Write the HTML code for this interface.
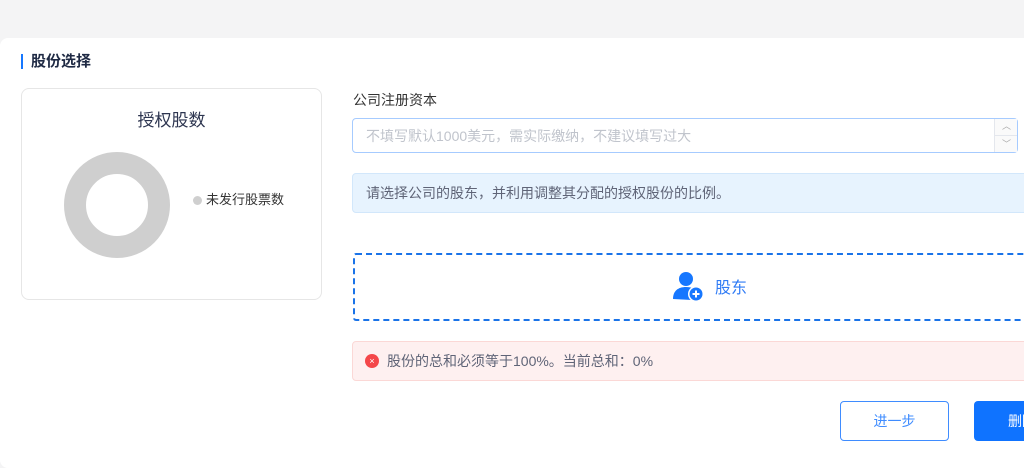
<!DOCTYPE html>
<html><head><meta charset="utf-8"><style>
*{margin:0;padding:0;box-sizing:border-box}
body{width:1024px;height:450px;overflow:hidden;background:#f4f4f5;font-family:"Liberation Sans","Noto Sans CJK SC",sans-serif;position:relative}
.card{position:absolute;left:0;top:38px;width:1040px;height:430px;background:#fff;border-radius:8px}
.a{position:absolute}
</style></head><body>
<div class="card"></div>
<div class="a" style="left:21px;top:54px;width:2px;height:15px;background:#1677ff"></div>
<div class="a" style="left:31px;top:51px;font-size:15px;font-weight:bold;color:#1f2a44;line-height:22px">股份选择</div>
<div class="a" style="left:21px;top:88px;width:301px;height:212px;border:1px solid #e6e6e6;border-radius:8px"></div>
<div class="a" style="left:0;width:343px;top:109px;text-align:center;font-size:17px;color:#2d3550;line-height:24px">授权股数</div>
<div class="a" style="left:64px;top:152px;width:106px;height:106px;border-radius:50%;border:22px solid #cfcfcf"></div>
<div class="a" style="left:193px;top:196px;width:9px;height:9px;border-radius:50%;background:#cfcfcf"></div>
<div class="a" style="left:206px;top:191px;font-size:13px;color:#333;line-height:18px">未发行股票数</div>
<div class="a" style="left:353px;top:90px;font-size:14px;color:#333;line-height:20px">公司注册资本</div>
<div class="a" style="left:352px;top:118px;width:666px;height:35px;border:1px solid #a6cbff;border-radius:4px"></div>
<div class="a" style="left:366px;top:126px;font-size:14px;color:#c0c4cc;line-height:20px">不填写默认1000美元，需实际缴纳，不建议填写过大</div>
<div class="a" style="left:994px;top:119px;width:23px;height:33px;border-left:1px solid #e4e7ed;background:#fafafa"></div>
<div class="a" style="left:994px;top:135px;width:23px;height:1px;background:#e4e7ed"></div>
<div class="a" style="left:1002px;top:119px;font-size:9px;color:#aaa">︿</div>
<div class="a" style="left:1002px;top:137px;font-size:9px;color:#aaa">﹀</div>
<div class="a" style="left:352px;top:173px;width:690px;height:40px;background:#e7f3fe;border:1px solid #d2e7fb;border-radius:4px"></div>
<div class="a" style="left:366px;top:183px;font-size:14px;color:#5f6477;line-height:20px">请选择公司的股东，并利用调整其分配的授权股份的比例。</div>
<div class="a" style="left:353px;top:253px;width:690px;height:68px;border:2px dashed #1a73e8;border-radius:3px"></div>
<svg class="a" style="left:672px;top:271px" width="34" height="32" viewBox="0 0 34 32">
<circle cx="14" cy="8" r="7" fill="#1677ff"/>
<path d="M1 28 C1 20 6 16 14 16 C20 16 24 18 25 21 L20 29 Z" fill="#1677ff"/>
<circle cx="24" cy="23" r="8" fill="#fff"/>
<circle cx="24" cy="23" r="6.5" fill="#1677ff"/>
<path d="M24 19.5V26.5M20.5 23H27.5" stroke="#fff" stroke-width="2"/>
</svg>
<div class="a" style="left:715px;top:277px;font-size:16px;color:#2f7bf5;line-height:24px">股东</div>
<div class="a" style="left:352px;top:341px;width:690px;height:40px;background:#fef0f0;border:1px solid #fbd8d6;border-radius:4px"></div>
<div class="a" style="left:365px;top:354px;width:14px;height:14px;border-radius:50%;background:#f4474a;color:#fff;font-size:9px;text-align:center;line-height:14px">×</div>
<div class="a" style="left:387px;top:351px;font-size:14px;color:#5f6477;line-height:20px">股份的总和必须等于100%。当前总和：0%</div>
<div class="a" style="left:840px;top:401px;width:109px;height:40px;border:1px solid #3f8cff;border-radius:4px;text-align:center;line-height:38px;font-size:14px;color:#3f8cff">进一步</div>
<div class="a" style="left:974px;top:401px;width:80px;height:40px;background:#0f73ff;border-radius:4px;font-size:14px;color:#fff;line-height:40px;padding-left:34px">删除</div>
</body></html>
